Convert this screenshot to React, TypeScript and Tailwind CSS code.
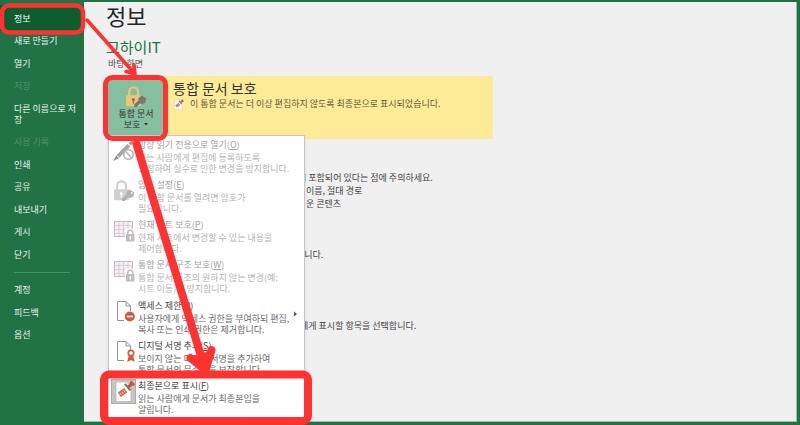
import React from 'react';
import clsx from 'clsx';

interface INavItem {
    label: string;
    disabled?: boolean;
}

interface IMenuItem {
    title: string;
    hotkey: string;
    description: string;
    icon: React.ReactNode;
    disabled?: boolean;
    selected?: boolean;
    hasSub?: boolean;
}

const NAV_MAIN: INavItem[] = [
    { label: '새로 만들기' },
    { label: '열기' },
    { label: '저장', disabled: true },
    { label: '다른 이름으로 저장' },
    { label: '사용 기록', disabled: true },
    { label: '인쇄' },
    { label: '공유' },
    { label: '내보내기' },
    { label: '게시' },
    { label: '닫기' }
];

const NAV_FOOTER: INavItem[] = [
    { label: '계정' },
    { label: '피드백' },
    { label: '옵션' }
];

const LockKeyIcon = ({
    lock,
    keyColor,
    hole,
    className
}: {
    lock: string;
    keyColor: string;
    hole: string;
    className: string;
}) => (
    <svg viewBox="0 0 20 20" className={className} aria-hidden="true">
        <path
            d="M3.8 9V5.2a4 4 0 0 1 8 0V9"
            fill="none"
            stroke={lock}
            strokeWidth="2"
        />
        <rect x="1" y="8.5" width="13.5" height="10" rx="1" fill={lock} />
        <circle cx="7.6" cy="12.3" r="1.4" fill={hole} />
        <path d="M7 12.5h1.3v3.5H7z" fill={hole} />
        <path
            d="M15 8.6l4.5 2.8-1 3.8-3.4 1.3-1.2-.8-3.3 3.3H8.4v-2.3l3.9-3.6-.3-1.7z"
            fill={keyColor}
        />
        <circle cx="17" cy="11.8" r=".8" fill={hole} />
    </svg>
);

const PenBlockedIcon = () => (
    <svg viewBox="0 0 22 22" className="w-[22px] h-[22px]" aria-hidden="true">
        <path d="M15.5 3.5L18.5.5l2 1.5-2.5 3.5z" fill="#9a9a9a" />
        <path d="M14.5 4l3 2.5L6.5 17.5l-3-2.5z" fill="#a6a6a6" />
        <path d="M3 15.5l3 2.5-5.500 3z" fill="#8c8c8c" />
        <circle
            cx="15.5"
            cy="14.5"
            r="4.7"
            fill="#fff"
            stroke="#b5b5b5"
            strokeWidth="1.6"
        />
        <path d="M12.3 11.3l6.4 6.4" stroke="#b5b5b5" strokeWidth="1.6" />
    </svg>
);

const SheetLockIcon = () => (
    <svg viewBox="0 0 22 22" className="w-[22px] h-[22px]" aria-hidden="true">
        <path
            d="M1.5 1.5h18v15h-18z"
            fill="#f5eff4"
            stroke="#b9b3b8"
            strokeWidth=".9"
        />
        <path
            d="M1.5 5.5h18M1.5 9.5h18M1.5 13.5h18M6 1.5v15M10.5 1.5v15M15 1.5v15"
            fill="none"
            stroke="#d3cad1"
            strokeWidth=".8"
        />
        <rect x="12" y="9" width="10" height="13" fill="#fff" />
        <path
            d="M14.8 14.5V12.8a2.5 2.5 0 0 1 5 0V14.5"
            fill="none"
            stroke="#c2bec2"
            strokeWidth="1.5"
        />
        <rect x="13" y="14" width="8.5" height="7.5" fill="#c2bec2" />
        <path d="M17.3 16v3.5" stroke="#fff" strokeWidth="1.3" />
    </svg>
);

const PageOutline = () => (
    <path
        d="M11 20.5H4.5v-19h8.5l4.5 4.5v5M13 1.5V6h4.5"
        fill="#fff"
        stroke="#8a8a8a"
        strokeWidth=".9"
    />
);

const RestrictIcon = () => (
    <svg viewBox="0 0 22 22" className="w-[22px] h-[22px]" aria-hidden="true">
        <PageOutline />
        <circle cx="16.8" cy="16.5" r="5" fill="#d35b3c" />
        <path d="M13.8 16.5h6" stroke="#fff" strokeWidth="1.6" />
    </svg>
);

const SignatureIcon = () => (
    <svg viewBox="0 0 22 22" className="w-[22px] h-[22px]" aria-hidden="true">
        <PageOutline />
        <path d="M16 14.5l-1.8 7.5 3.8-2 3.5 2L20 14.5z" fill="#d35b3c" />
        <circle
            cx="18"
            cy="13"
            r="2.7"
            fill="#fff"
            stroke="#d35b3c"
            strokeWidth="1.7"
        />
    </svg>
);

const FinalIcon = ({ className }: { className: string }) => (
    <svg viewBox="0 0 22 22" className={className} aria-hidden="true">
        <path
            d="M3 2h10.5l4.5 4.5v15H3z"
            fill="#fff"
            stroke="#b5b5b5"
            strokeWidth=".7"
        />
        <path d="M4.800 12.500l6.500-4.500 3 4.500-6.500 4.500z" fill="#d9694c" />
        <path
            d="M7 13.300l1 1.500M9 12l1 1.500M11 10.600l1 1.500"
            stroke="#fff"
            strokeWidth=".8"
        />
        <path d="M11 4.500l1.800-1.300 5.500 6.500-1.800 1.300z" fill="#777777" />
        <path d="M14 6l2.5-2.3.5-2L18.5.5 22 4.3l-1.200 1.400-2.100.3-2 2.200z" fill="#c9583b" />
    </svg>
);

const MENU: IMenuItem[] = [
    {
        title: '항상 읽기 전용으로 열기',
        hotkey: 'O',
        description:
            '읽는 사람에게 편집에 등록하도록\n요청하여 실수로 인한 변경을 방지합니다.',
        icon: <PenBlockedIcon />,
        disabled: true
    },
    {
        title: '암호 설정',
        hotkey: 'E',
        description: '이 통합 문서를 열려면 암호가\n필요합니다.',
        icon: (
            <LockKeyIcon
                lock="#d3ced1"
                keyColor="#b3b3b3"
                hole="#ffffff"
                className="w-[22px] h-[22px]"
            />
        ),
        disabled: true
    },
    {
        title: '현재 시트 보호',
        hotkey: 'P',
        description: '현재 시트에서 변경할 수 있는 내용을\n제어합니다.',
        icon: <SheetLockIcon />,
        disabled: true
    },
    {
        title: '통합 문서 구조 보호',
        hotkey: 'W',
        description:
            '통합 문서 구조의 원하지 않는 변경(예:\n시트 이동)을 방지합니다.',
        icon: <SheetLockIcon />,
        disabled: true
    },
    {
        title: '액세스 제한',
        hotkey: 'R',
        description:
            '사용자에게 액세스 권한을 부여하되 편집,\n복사 또는 인쇄 권한은 제거합니다.',
        icon: <RestrictIcon />,
        hasSub: true
    },
    {
        title: '디지털 서명 추가',
        hotkey: 'S',
        description:
            '보이지 않는 디지털 서명을 추가하여\n통합 문서의 무결성을 보장합니다.',
        icon: <SignatureIcon />
    },
    {
        title: '최종본으로 표시',
        hotkey: 'F',
        description: '읽는 사람에게 문서가 최종본임을\n알립니다.',
        icon: <FinalIcon className="w-[22px] h-[22px]" />,
        selected: true
    }
];

const NavButton = ({ label, disabled }: INavItem) => (
    <button
        type="button"
        disabled={disabled}
        className={clsx(
            'block w-full pl-3.5 pr-1 text-left',
            disabled ? 'text-[#4b9168]' : 'text-[#e6f2ea]'
        )}
    >
        {label}
    </button>
);

const Sidebar = () => (
    <nav className="w-[84px] shrink-0 bg-[#217346] pt-[3px] text-[9px] leading-[11px] break-all">
        <button
            type="button"
            aria-current="page"
            className="block w-full h-[26px] pl-3.5 text-left bg-[#0f5c2f] text-white"
        >
            정보
        </button>
        <ul className="flex flex-col justify-between h-[225px] mt-1">
            {NAV_MAIN.map((item) => (
                <li key={item.label}>
                    <NavButton {...item} />
                </li>
            ))}
        </ul>
        <hr className="mt-3 mx-3.5 border-[#439467]" />
        <ul className="flex flex-col justify-between h-[56px] mt-[11px]">
            {NAV_FOOTER.map((item) => (
                <li key={item.label}>
                    <NavButton {...item} />
                </li>
            ))}
        </ul>
    </nav>
);

const ProtectMenu = () => (
    <ul
        role="menu"
        className="absolute left-0 top-full flex flex-col justify-between w-[197px] h-[289px] pt-0.5 pb-1 bg-white border border-[#c6c6c6] shadow-sm text-[9px]"
    >
        {MENU.map((item) => (
            <li key={item.title} role="none">
                <button
                    type="button"
                    role="menuitem"
                    disabled={item.disabled}
                    className="flex w-full h-10 items-start text-left"
                >
                    <span
                        className={clsx(
                            'flex w-[25px] h-[25px] mx-0.5 items-center justify-center shrink-0',
                            item.selected && 'bg-[#c5c5c5] border border-[#ababab]'
                        )}
                    >
                        {item.icon}
                    </span>
                    <span className="flex-1">
                        <span
                            className={clsx(
                                'block leading-[14px]',
                                item.disabled
                                    ? 'text-[#a3a3a3]'
                                    : 'text-[#444444]'
                            )}
                        >
                            {item.title}(<u>{item.hotkey}</u>)
                        </span>
                        <span
                            className={clsx(
                                'block leading-[11px] whitespace-pre',
                                item.disabled
                                    ? 'text-[#b5b5b5]'
                                    : 'text-[#6b6b6b]'
                            )}
                        >
                            {item.description}
                        </span>
                    </span>
                    {item.hasSub && (
                        <svg
                            viewBox="0 0 4 6"
                            className="w-1 h-1.5 mt-3 mr-1.5"
                            aria-hidden="true"
                        >
                            <path d="M0 .5l3 2.5-3 2.500z" fill="#555" />
                        </svg>
                    )}
                </button>
            </li>
        ))}
    </ul>
);

const ProtectPanel = () => (
    <section className="flex w-[385px] h-[63px] mt-1.5 bg-[#fdeb98]">
        <div className="relative h-[59px] pt-1">
            <button
                type="button"
                aria-haspopup="menu"
                aria-expanded="true"
                className="flex flex-col items-center w-14 h-14 pt-1.5 bg-[#86bf9f] text-[9px] leading-[11px] text-[#333333]"
            >
                <LockKeyIcon
                    lock="#edc573"
                    keyColor="#777777"
                    hole="#777777"
                    className="w-[22px] h-[22px] shrink-0"
                />
                <span>통합 문서</span>
                <span className="flex items-center gap-1">
                    보호
                    <svg viewBox="0 0 4 3" className="w-1 h-[3px]" aria-hidden="true">
                        <path d="M0 0h4L2 2.500z" fill="#333" />
                    </svg>
                </span>
            </button>
            <ProtectMenu />
        </div>
        <div className="pl-[9px] pt-0.5 text-[#333333]">
            <h3 className="text-sm leading-5">통합 문서 보호</h3>
            <p className="flex items-center gap-1.5 text-[9px] leading-3 text-[#5f5a45]">
                <FinalIcon className="w-[11px] h-[11px]" />이 통합 문서는 더 이상
                편집하지 않도록 최종본으로 표시되었습니다.
            </p>
        </div>
    </section>
);

const Annotations = () => (
    <svg
        viewBox="0 0 320 425"
        className="absolute left-0 top-0 w-80 h-[425px] pointer-events-none"
        fill="none"
        stroke="#ff3131"
        aria-hidden="true"
    >
        <rect x="2" y="5.5" width="81" height="27" rx="7" strokeWidth="4.5" />
        <rect x="105.5" y="77.5" width="60" height="61" rx="7" strokeWidth="5" />
        <rect x="104" y="374.5" width="204" height="46.5" rx="5" strokeWidth="8" />
        <path
            d="M87 20L134 73M126 71.5L135 74L134 65"
            strokeWidth="3.5"
            strokeLinecap="round"
            strokeLinejoin="round"
        />
        <path
            d="M136.500 144L204 366M190.500 358L205.500 370L211.500 350"
            strokeWidth="8"
            strokeLinecap="round"
            strokeLinejoin="round"
        />
        <path d="M190.500 358L205.500 370L211.500 350L200 354z" fill="#ff3131" stroke="none" />
    </svg>
);

const App: React.FC = () => {
    return (
        <div className="relative flex min-h-screen overflow-hidden bg-[#217346] pt-0.5 pr-[3px] pb-[3px] font-['Noto_Sans_CJK_KR',sans-serif]">
            <Sidebar />
            <main className="flex-1 min-w-0 pl-6 bg-[#f0f0f0] border-r border-b border-[#9dbfab]">
                <h1 className="-ml-0.5 text-[22px] leading-[26px] text-[#262626]">정보</h1>
                <h2 className="-ml-0.5 mt-2 text-[15px] leading-[22px] text-[#217346]">
                    고하이IT
                </h2>
                <p className="text-[9px] leading-3 text-[#555555]">바탕 화면</p>
                <ProtectPanel />
                <div className="pl-[188px] pt-8 text-[9px] leading-[13px] text-[#444444]">
                    <p className="pl-0.5">이 포함되어 있다는 점에 주의하세요.</p>
                    <p className="pl-2.5">이름, 절대 경로</p>
                    <p className="pl-2.5">운 콘텐츠</p>
                    <p className="mt-[38px]">습니다.</p>
                    <p className="mt-[58px] pl-1">에게 표시할 항목을 선택합니다.</p>
                </div>
            </main>
            <Annotations />
        </div>
    );
};

export default App;
